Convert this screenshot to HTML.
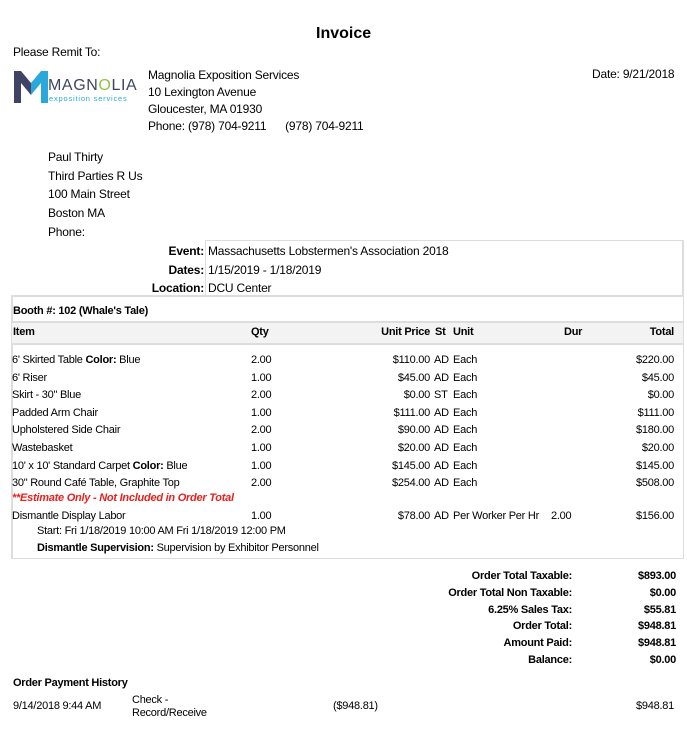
<!DOCTYPE html>
<html><head><style>
body{margin:0;width:687px;height:738px;background:#fff;font-family:"Liberation Sans",Arial,sans-serif;color:#000;position:relative;overflow:hidden}
.a{position:absolute;white-space:nowrap}
.s{font-size:11px;letter-spacing:-0.25px}
.m{font-size:12px;letter-spacing:-0.2px}
.r{text-align:right}
b{font-weight:bold}
</style></head><body>
<div class="a" style="left:316px;top:25px;font-size:16px;font-weight:bold">Invoice</div>
<div class="a m" style="left:13px;top:45px">Please Remit To:</div>
<svg class="a" style="left:14px;top:71px" width="34" height="32" viewBox="0 0 34 32">
<polygon points="0,0 7,0 17,12 17,24 7,12 7,32 0,32" fill="#3f4466"/>
<polygon points="17,12 27,0 34,0 34,32 27,32 27,12 17,24" fill="#2aa8dc"/>
</svg>
<div class="a" style="left:48px;top:77px;font-size:16px;color:#3f4466;letter-spacing:0.6px">MAGN<span style="color:#8cc63f">O</span>LIA</div>
<div class="a" style="left:49px;top:94px;font-size:7.5px;color:#2aa8dc;letter-spacing:0.8px">exposition services</div>
<div class="a m" style="left:148px;top:67px;line-height:17px">Magnolia Exposition Services<br>10 Lexington Avenue<br>Gloucester, MA 01930<br>Phone: (978) 704-9211 &nbsp;&nbsp;&nbsp;&nbsp;&nbsp;(978) 704-9211</div>
<div class="a m" style="left:592px;top:67px">Date: 9/21/2018</div>
<div class="a m" style="left:48px;top:148px;line-height:18.7px">Paul Thirty<br>Third Parties R Us<br>100 Main Street<br>Boston MA<br>Phone:</div>
<div class="a" style="left:205px;top:240px;width:476px;height:54px;border:1px solid #ddd;border-right:2px solid #ddd"></div>
<div class="a m r" style="left:100px;width:104px;top:242px;line-height:18.5px"><b>Event:</b><br><b>Dates:</b><br><b>Location:</b></div>
<div class="a m" style="left:208px;top:242px;line-height:18.5px">Massachusetts Lobstermen's Association 2018<br>1/15/2019 - 1/18/2019<br>DCU Center</div>
<div class="a" style="left:11px;top:295px;width:670px;height:261px;border:2px solid #ddd;border-bottom:1px solid #ddd;border-right:1px solid #ddd"></div>
<div class="a s" style="left:13px;top:305px"><b>Booth #: 102 (Whale's Tale)</b></div>
<div class="a" style="left:12px;top:321px;width:671px;height:20px;background:#f3f3f3;border-top:2px solid #ddd;border-bottom:2px solid #ddd"></div>
<div class="a s" style="left:13px;top:326px"><b>Item</b></div>
<div class="a s" style="left:251px;top:326px"><b>Qty</b></div>
<div class="a s r" style="left:330px;width:100px;top:326px"><b>Unit Price</b></div>
<div class="a s" style="left:435px;top:326px"><b>St</b></div>
<div class="a s" style="left:453px;top:326px"><b>Unit</b></div>
<div class="a s" style="left:564px;top:326px"><b>Dur</b></div>
<div class="a s r" style="left:600px;width:74px;top:326px"><b>Total</b></div>
<div class="a s" style="left:12px;top:352px;line-height:17.6px">6' Skirted Table <b>Color:</b> Blue<br>6' Riser<br>Skirt - 30" Blue<br>Padded Arm Chair<br>Upholstered Side Chair<br>Wastebasket<br>10' x 10' Standard Carpet <b>Color:</b> Blue<br>30" Round Café Table, Graphite Top</div>
<div class="a s" style="left:251px;top:352px;line-height:17.6px">2.00<br>1.00<br>2.00<br>1.00<br>2.00<br>1.00<br>1.00<br>2.00</div>
<div class="a s r" style="left:330px;width:100px;top:352px;line-height:17.6px">$110.00<br>$45.00<br>$0.00<br>$111.00<br>$90.00<br>$20.00<br>$145.00<br>$254.00</div>
<div class="a s" style="left:434px;top:352px;line-height:17.6px">AD<br>AD<br>ST<br>AD<br>AD<br>AD<br>AD<br>AD</div>
<div class="a s" style="left:453px;top:352px;line-height:17.6px">Each<br>Each<br>Each<br>Each<br>Each<br>Each<br>Each<br>Each</div>
<div class="a s r" style="left:600px;width:74px;top:352px;line-height:17.6px">$220.00<br>$45.00<br>$0.00<br>$111.00<br>$180.00<br>$20.00<br>$145.00<br>$508.00</div>
<div class="a s" style="left:12px;top:492px;color:#e8211d;font-style:italic;font-weight:bold">**Estimate Only - Not Included in Order Total</div>
<div class="a s" style="left:12px;top:510px">Dismantle Display Labor</div>
<div class="a s" style="left:251px;top:510px">1.00</div>
<div class="a s r" style="left:330px;width:100px;top:510px">$78.00</div>
<div class="a s" style="left:434px;top:510px">AD</div>
<div class="a s" style="left:453px;top:510px">Per Worker Per Hr</div>
<div class="a s" style="left:551px;top:510px">2.00</div>
<div class="a s r" style="left:600px;width:74px;top:510px">$156.00</div>
<div class="a s" style="left:37px;top:525px">Start: Fri 1/18/2019 10:00 AM Fri 1/18/2019 12:00 PM</div>
<div class="a s" style="left:37px;top:542px"><b>Dismantle Supervision:</b> Supervision by Exhibitor Personnel</div>
<div class="a s r" style="left:380px;width:192px;top:568px;line-height:16.8px"><b>Order Total Taxable:<br>Order Total Non Taxable:<br>6.25% Sales Tax:<br>Order Total:<br>Amount Paid:<br>Balance:</b></div>
<div class="a s r" style="left:590px;width:86px;top:568px;line-height:16.8px"><b>$893.00<br>$0.00<br>$55.81<br>$948.81<br>$948.81<br>$0.00</b></div>
<div class="a s" style="left:13px;top:677px"><b>Order Payment History</b></div>
<div class="a s" style="left:13px;top:700px">9/14/2018 9:44 AM</div>
<div class="a s" style="left:132px;top:694px;line-height:13px">Check -<br>Record/Receive</div>
<div class="a s" style="left:333px;top:700px">($948.81)</div>
<div class="a s r" style="left:600px;width:74px;top:700px">$948.81</div>
</body></html>
